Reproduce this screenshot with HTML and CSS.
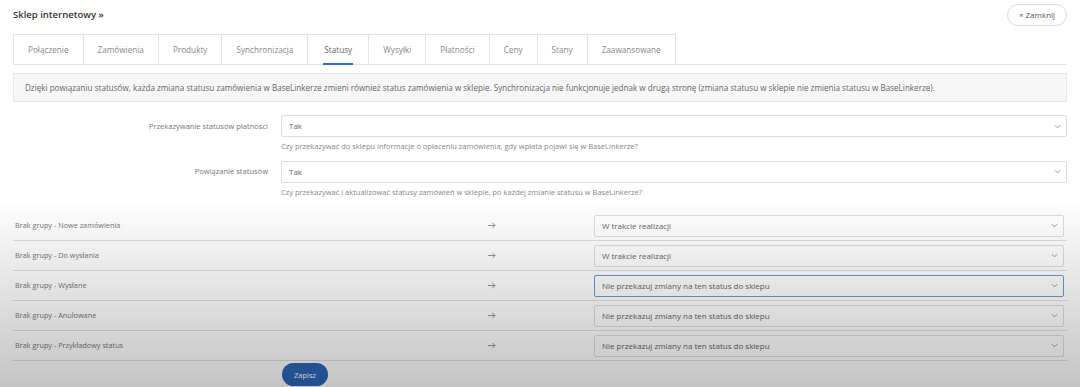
FILE: index.html
```html
<!DOCTYPE html>
<html lang="pl">
<head>
    <meta charset="UTF-8">
    <meta name="viewport" content="width=device-width, initial-scale=1.0">
    <title>Sklep internetowy - Statusy</title>
    <link rel="stylesheet" href="styles.css">
</head>
<body>
    <div class="page">
        <header class="topbar">
            <h1 class="title">Sklep internetowy &raquo;</h1>
            <button class="close-btn">&times; Zamknij</button>
        </header>

        <nav class="tabs">
            <a href="#" class="tab">Połączenie</a>
            <a href="#" class="tab">Zamówienia</a>
            <a href="#" class="tab">Produkty</a>
            <a href="#" class="tab">Synchronizacja</a>
            <a href="#" class="tab active">Statusy</a>
            <a href="#" class="tab">Wysyłki</a>
            <a href="#" class="tab">Płatności</a>
            <a href="#" class="tab">Ceny</a>
            <a href="#" class="tab">Stany</a>
            <a href="#" class="tab">Zaawansowane</a>
        </nav>

        <div class="info">
            Dzięki powiązaniu statusów, każda zmiana statusu zamówienia w BaseLinkerze zmieni również status zamówienia w sklepie. Synchronizacja nie funkcjonuje jednak w drugą stronę (zmiana statusu w sklepie nie zmienia statusu w BaseLinkerze).
        </div>

        <div class="form-row">
            <label class="form-label">Przekazywanie statusów płatności</label>
            <div class="field">
                <div class="select">Tak
                    <svg class="chevron" viewBox="0 0 8 5"><path d="M1 1l3 3 3-3" fill="none" stroke="#888" stroke-width="1"/></svg>
                </div>
                <p class="help">Czy przekazywać do sklepu informacje o opłaceniu zamówienia, gdy wpłata pojawi się w BaseLinkerze?</p>
            </div>
        </div>

        <div class="form-row">
            <label class="form-label">Powiązanie statusów</label>
            <div class="field">
                <div class="select">Tak
                    <svg class="chevron" viewBox="0 0 8 5"><path d="M1 1l3 3 3-3" fill="none" stroke="#888" stroke-width="1"/></svg>
                </div>
                <p class="help">Czy przekazywać i aktualizować statusy zamówień w sklepie, po każdej zmianie statusu w BaseLinkerze?</p>
            </div>
        </div>

        <div class="map">
            <div class="map-row">
                <span class="map-label">Brak grupy - Nowe zamówienia</span>
                <svg class="arrow" viewBox="0 0 10 8"><path d="M1 4h8M6 1l3 3-3 3" fill="none" stroke="#777" stroke-width="0.9"/></svg>
                <div class="select">W trakcie realizacji
                    <svg class="chevron" viewBox="0 0 8 5"><path d="M1 1l3 3 3-3" fill="none" stroke="#888" stroke-width="1"/></svg>
                </div>
            </div>
            <div class="map-row">
                <span class="map-label">Brak grupy - Do wysłania</span>
                <svg class="arrow" viewBox="0 0 10 8"><path d="M1 4h8M6 1l3 3-3 3" fill="none" stroke="#777" stroke-width="0.9"/></svg>
                <div class="select">W trakcie realizacji
                    <svg class="chevron" viewBox="0 0 8 5"><path d="M1 1l3 3 3-3" fill="none" stroke="#888" stroke-width="1"/></svg>
                </div>
            </div>
            <div class="map-row">
                <span class="map-label">Brak grupy - Wysłane</span>
                <svg class="arrow" viewBox="0 0 10 8"><path d="M1 4h8M6 1l3 3-3 3" fill="none" stroke="#777" stroke-width="0.9"/></svg>
                <div class="select focused">Nie przekazuj zmiany na ten status do sklepu
                    <svg class="chevron" viewBox="0 0 8 5"><path d="M1 1l3 3 3-3" fill="none" stroke="#888" stroke-width="1"/></svg>
                </div>
            </div>
            <div class="map-row">
                <span class="map-label">Brak grupy - Anulowane</span>
                <svg class="arrow" viewBox="0 0 10 8"><path d="M1 4h8M6 1l3 3-3 3" fill="none" stroke="#777" stroke-width="0.9"/></svg>
                <div class="select">Nie przekazuj zmiany na ten status do sklepu
                    <svg class="chevron" viewBox="0 0 8 5"><path d="M1 1l3 3 3-3" fill="none" stroke="#888" stroke-width="1"/></svg>
                </div>
            </div>
            <div class="map-row">
                <span class="map-label">Brak grupy - Przykładowy status</span>
                <svg class="arrow" viewBox="0 0 10 8"><path d="M1 4h8M6 1l3 3-3 3" fill="none" stroke="#777" stroke-width="0.9"/></svg>
                <div class="select">Nie przekazuj zmiany na ten status do sklepu
                    <svg class="chevron" viewBox="0 0 8 5"><path d="M1 1l3 3 3-3" fill="none" stroke="#888" stroke-width="1"/></svg>
                </div>
            </div>
        </div>

        <div class="actions">
            <button class="save-btn">Zapisz</button>
        </div>
    </div>
</body>
</html>
```

FILE: styles.css
```css
* {
    margin: 0;
    padding: 0;
    box-sizing: border-box;
    font-family: 'Open Sans', sans-serif;
}

body {
    background: white;
    color: #666;
    font-size: 8px;
    line-height: 1.4;
    overflow: hidden;
}

/* darkening fade over the lower part of the screen */
body::after {
    content: '';
    position: fixed;
    left: 0;
    right: 0;
    top: 200px;
    bottom: 0;
    background: linear-gradient(rgba(0,0,0,0), rgba(0,0,0,0.23));
    pointer-events: none;
}

.page {
    padding: 0 13px;
}

.topbar {
    height: 29px;
    display: flex;
    justify-content: space-between;
    align-items: center;
}

.title {
    font-size: 9.5px;
    font-weight: 600;
    color: #333;
}

.close-btn {
    width: 60px;
    height: 22px;
    border: 1px solid #ddd;
    border-radius: 11px;
    background: white;
    color: #555;
    font-size: 8px;
}

.tabs {
    display: flex;
    margin-top: 5px;
    border-bottom: 1px solid #e3e3e3;
}

.tab {
    height: 30px;
    padding: 0 14px;
    display: flex;
    align-items: center;
    border: 1px solid #e3e3e3;
    border-bottom: none;
    margin-right: -1px;
    text-decoration: none;
    color: #888;
    font-size: 8.2px;
    position: relative;
}

.tab.active {
    padding: 0 16px;
    color: #666;
}

.tab.active::after {
    content: '';
    position: absolute;
    left: 15px;
    right: 15px;
    bottom: -1px;
    height: 2px;
    background: #2d6cc5;
}

.info {
    margin-top: 8px;
    height: 29px;
    display: flex;
    align-items: center;
    padding: 0 11px;
    background: #f7f7f7;
    border: 1px solid #e6e6e6;
    color: #666;
    font-size: 8.1px;
}

.form-row {
    display: grid;
    grid-template-columns: 255px 1fr;
    gap: 13px;
    margin-top: 13px;
}

.form-row + .form-row {
    margin-top: 9px;
}

.form-label {
    height: 22px;
    display: flex;
    align-items: center;
    justify-content: flex-end;
    color: #777;
    font-size: 7.55px;
}

.select {
    height: 22px;
    display: flex;
    align-items: center;
    justify-content: space-between;
    padding: 0 5px 0 7px;
    background: white;
    border: 1px solid #dedede;
    border-radius: 2px;
    color: #666;
    font-size: 8px;
}

.select.focused {
    border-color: #6f9bd0;
}

.chevron {
    width: 7px;
    height: 5px;
}

.help {
    margin-top: 4px;
    color: #888;
    font-size: 7.5px;
}

.map {
    margin-top: 14px;
}

.map-row {
    display: grid;
    grid-template-columns: 472px 107px 1fr;
    align-items: center;
    height: 30px;
    padding: 0 3px 0 2px;
    border-bottom: 1px solid #e0e0e0;
}

.map-label {
    color: #777;
    font-size: 7.3px;
}

.arrow {
    width: 9px;
    height: 7px;
}

.actions {
    padding: 2px 0 0 269px;
}

.save-btn {
    width: 46px;
    height: 23px;
    border: none;
    border-radius: 12px;
    background: #2c68b9;
    color: white;
    font-size: 7.5px;
}
```
